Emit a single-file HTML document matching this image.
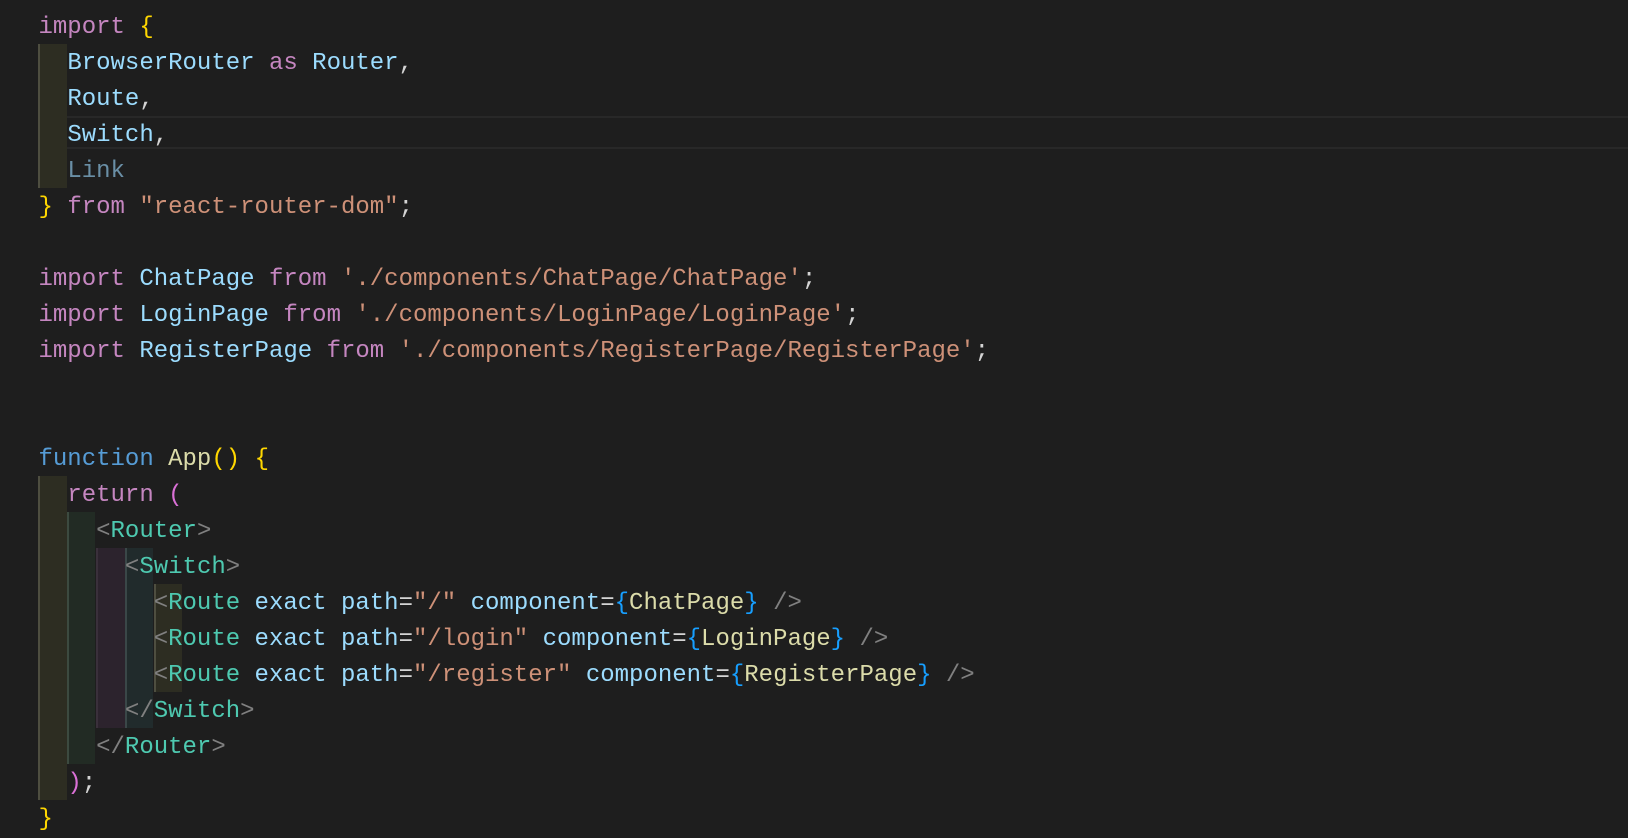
<!DOCTYPE html>
<html><head><meta charset="utf-8"><style>
html,body{margin:0;padding:0;background:#1e1e1e;width:1628px;height:838px;overflow:hidden;position:relative}
pre{position:absolute;left:38.5px;top:10px;margin:0;font-family:"Liberation Mono",monospace;font-size:24px;line-height:36px;color:#d4d4d4;z-index:2}
.b{position:absolute;z-index:1}
.k{color:#c586c0}.y{color:#ffd700}.v{color:#9cdcfe}.u{color:#6a8fa6}.s{color:#ce9178}.f{color:#569cd6}.fn{color:#dcdcaa}.m{color:#da70d6}.g{color:#808080}.t{color:#4ec9b0}.bl{color:#179fff}.p{color:#d4d4d4}
</style></head><body>
<div class="b" style="left:66px;top:116px;right:0;height:2px;background:#282828"></div>
<div class="b" style="left:66px;top:147px;right:0;height:2px;background:#282828"></div>
<div class="b" style="left:38px;top:44px;width:28.7px;height:144px;background:#2d2d22;border-left:2px solid #4e4e40;box-sizing:border-box"></div>
<div class="b" style="left:38px;top:476px;width:28.7px;height:324px;background:#2d2d22;border-left:2px solid #4e4e40;box-sizing:border-box"></div>
<div class="b" style="left:67px;top:512px;width:27.5px;height:252px;background:#222b24;border-left:2px solid #3c4a40;box-sizing:border-box"></div>
<div class="b" style="left:96px;top:548px;width:29px;height:180px;background:#2c232d;border-left:2px solid #3a303b;box-sizing:border-box"></div>
<div class="b" style="left:125px;top:548px;width:28px;height:180px;background:#212b2c;border-left:2px solid #3a4748;box-sizing:border-box"></div>
<div class="b" style="left:153.5px;top:584px;width:28.5px;height:108px;background:#2d2d22;border-left:2px solid #4e4e40;box-sizing:border-box"></div>
<pre><span class="k">import</span> <span class="y">{</span>
  <span class="v">BrowserRouter</span> <span class="k">as</span> <span class="v">Router</span>,
  <span class="v">Route</span>,
  <span class="v">Switch</span>,
  <span class="u">Link</span>
<span class="y">}</span> <span class="k">from</span> <span class="s">"react-router-dom"</span>;

<span class="k">import</span> <span class="v">ChatPage</span> <span class="k">from</span> <span class="s">'./components/ChatPage/ChatPage'</span>;
<span class="k">import</span> <span class="v">LoginPage</span> <span class="k">from</span> <span class="s">'./components/LoginPage/LoginPage'</span>;
<span class="k">import</span> <span class="v">RegisterPage</span> <span class="k">from</span> <span class="s">'./components/RegisterPage/RegisterPage'</span>;


<span class="f">function</span> <span class="fn">App</span><span class="y">()</span> <span class="y">{</span>
  <span class="k">return</span> <span class="m">(</span>
    <span class="g">&lt;</span><span class="t">Router</span><span class="g">&gt;</span>
      <span class="g">&lt;</span><span class="t">Switch</span><span class="g">&gt;</span>
        <span class="g">&lt;</span><span class="t">Route</span> <span class="v">exact</span> <span class="v">path</span>=<span class="s">"/"</span> <span class="v">component</span>=<span class="bl">{</span><span class="fn">ChatPage</span><span class="bl">}</span> <span class="g">/&gt;</span>
        <span class="g">&lt;</span><span class="t">Route</span> <span class="v">exact</span> <span class="v">path</span>=<span class="s">"/login"</span> <span class="v">component</span>=<span class="bl">{</span><span class="fn">LoginPage</span><span class="bl">}</span> <span class="g">/&gt;</span>
        <span class="g">&lt;</span><span class="t">Route</span> <span class="v">exact</span> <span class="v">path</span>=<span class="s">"/register"</span> <span class="v">component</span>=<span class="bl">{</span><span class="fn">RegisterPage</span><span class="bl">}</span> <span class="g">/&gt;</span>
      <span class="g">&lt;/</span><span class="t">Switch</span><span class="g">&gt;</span>
    <span class="g">&lt;/</span><span class="t">Router</span><span class="g">&gt;</span>
  <span class="m">)</span>;
<span class="y">}</span></pre>
</body></html>
